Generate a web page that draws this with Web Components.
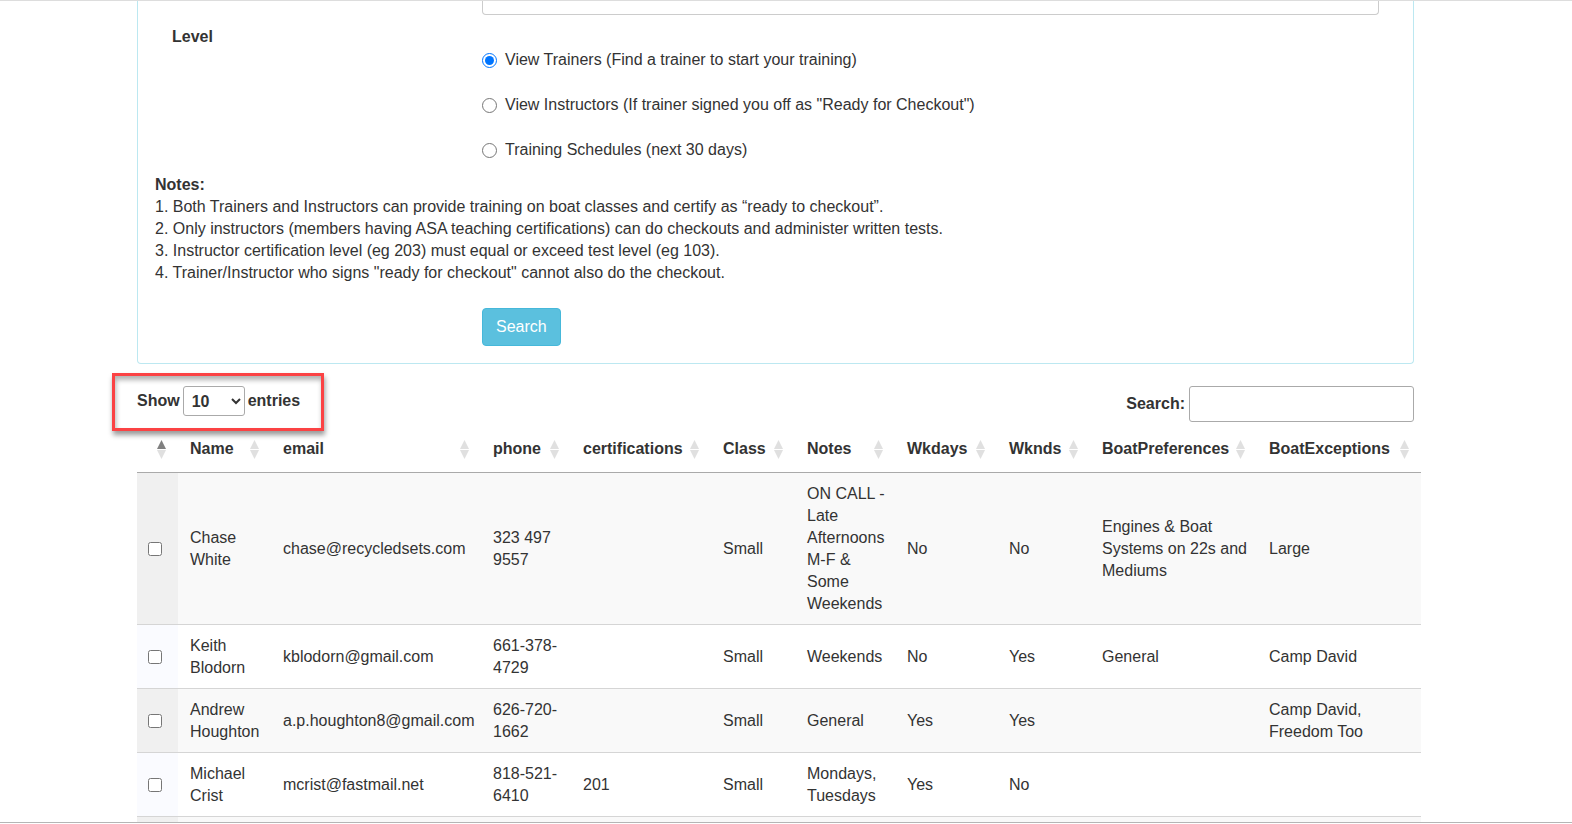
<!DOCTYPE html>
<html lang="en">
<head>
<meta charset="utf-8">
<title>Trainer search</title>
<style>
html, body { margin: 0; }
body { font: 16px/22px "Liberation Sans", Arial, sans-serif; color: #333; background: #fff; }
</style>
</head>
<body>
<trainer-page>
  <search-panel>
    <level-options slot="options"></level-options>
    <training-notes slot="notes"></training-notes>
  </search-panel>
  <table-toolbar></table-toolbar>
  <trainer-table></trainer-table>
</trainer-page>

<script>
function define(name, html, setup) {
  const template = document.createElement('template');
  template.innerHTML = '<style>*{box-sizing:border-box}</style>' + html;
  customElements.define(name, class extends HTMLElement {
    constructor() {
      super();
      this.attachShadow({ mode: 'open' }).append(template.content.cloneNode(true));
      if (setup) setup(this.shadowRoot);
    }
  });
}

define('trainer-page', `
<style>
:host { display: flex; flex-direction: column; box-sizing: border-box; height: calc(100vh - 1px); overflow: hidden;
  border-top: 1px solid #ddd; border-bottom: 1px solid #b5b5b5; }
main { flex: none; padding: 0 158px 0 137px; }
</style>
<main><slot></slot></main>`);

define('search-panel', `
<style>
:host { display: block; }
form { border: 1px solid #bce8f1; border-top: 0; border-radius: 0 0 4px 4px; padding: 0 34px 17px 17px; }
.field { display: grid; grid-template-columns: 327px 1fr; }
input { display: block; width: 100%; height: 14px; border: 1px solid #ccc; border-top: 0; border-radius: 0 0 4px 4px; background: #fff; }
.label { font-weight: bold; padding: 11px 0 0 17px; }
.right { grid-column: 2; }
button { height: 38px; padding: 0 13px; font: inherit; color: #fff; background: #5bc0de; border: 1px solid #46b8da; border-radius: 4px; }
</style>
<form onsubmit="return false">
  <div class="field"><input class="right" type="text" aria-label="Class"></div>
  <div class="field"><span class="label">Level</span><slot name="options"></slot></div>
  <slot name="notes"></slot>
  <div class="field"><div class="right"><button type="submit">Search</button></div></div>
</form>`);

define('level-options', `
<style>
:host { display: block; padding: 34px 0 13px; }
div { display: grid; gap: 23px; }
label { display: flex; align-items: center; gap: 8px; }
input { margin: 0; width: 15px; height: 15px; accent-color: #0075ff; }
</style>
<div role="radiogroup" aria-label="Level">
  <label><input type="radio" name="level" checked>View Trainers (Find a trainer to start your training)</label>
  <label><input type="radio" name="level">View Instructors (If trainer signed you off as "Ready for Checkout")</label>
  <label><input type="radio" name="level">Training Schedules (next 30 days)</label>
</div>`);

define('training-notes', `
<style>
:host { display: block; padding-bottom: 24px; }
p { margin: 0; }
</style>
<p><b>Notes:</b></p>
<p>1. Both Trainers and Instructors can provide training on boat classes and certify as “ready to checkout”.</p>
<p>2. Only instructors (members having ASA teaching certifications) can do checkouts and administer written tests.</p>
<p>3. Instructor certification level (eg 203) must equal or exceed test level (eg 103).</p>
<p>4. Trainer/Instructor who signs "ready for checkout" cannot also do the checkout.</p>`);

define('table-toolbar', `
<style>
:host { display: flex; justify-content: space-between; align-items: flex-start; padding-top: 22px; font-weight: bold; }
.length { position: relative; }
.length::after { content: ""; position: absolute; inset: -13px -24px -15px -25px; border: 3px solid #fb4244;
  box-shadow: 1px 4px 5px rgba(0,0,0,.4), inset 1px 4px 5px rgba(0,0,0,.3); pointer-events: none; }
label { display: flex; align-items: center; gap: 4px; }
.length label { gap: 3px; }
select { width: 62px; height: 30px; padding: 4px; font: inherit; color: inherit; background: #fff; border: 1px solid #aaa; border-radius: 3px; }
input { width: 225px; height: 36px; padding: 5px; font: inherit; background: #fff; border: 1px solid #aaa; border-radius: 3px; }
</style>
<div class="length"><label>Show <select><option>10</option><option>25</option><option>50</option></select> entries</label></div>
<label>Search: <input type="search"></label>`);

define('sort-mark', `
<style>
:host { display: block; width: 9px; height: 19px; --up: #e0e0e0; }
:host([active]) { --up: #808080; }
svg { display: block; }
</style>
<svg width="9" height="19" viewBox="0 0 9 19" aria-hidden="true"><path d="M0 9 4.500 0 9 9z" style="fill:var(--up)"/><path d="M0 10h9L4.500 19z" fill="#e0e0e0"/></svg>`);

const columns = [
  ['', 41], ['Name', 93], ['email', 210], ['phone', 90], ['certifications', 140], ['Class', 84],
  ['Notes', 100], ['Wkdays', 102], ['Wknds', 93], ['BoatPreferences', 167], ['BoatExceptions', 164]
];
const trainers = [
  ['Chase White', 'chase@recycledsets.com', '323 497 9557', '', 'Small', 'ON CALL - Late Afternoons M-F & Some Weekends', 'No', 'No', 'Engines & Boat Systems on 22s and Mediums', 'Large'],
  ['Keith Blodorn', 'kblodorn@gmail.com', '661-378-4729', '', 'Small', 'Weekends', 'No', 'Yes', 'General', 'Camp David'],
  ['Andrew Houghton', 'a.p.houghton8@gmail.com', '626-720-1662', '', 'Small', 'General', 'Yes', 'Yes', '', 'Camp David, Freedom Too'],
  ['Michael Crist', 'mcrist@fastmail.net', '818-521-6410', '201', 'Small', 'Mondays, Tuesdays', 'Yes', 'No', '', ''],
  ['', '', '', '', '', '', '', '', '', '']
];

define('trainer-table', `
<style>
:host { display: block; margin-right: -7px; }
table { width: 100%; table-layout: fixed; border-collapse: separate; border-spacing: 0; }
th { padding: 0; text-align: left; border-bottom: 1px solid #aaa; }
th button { display: flex; align-items: center; justify-content: space-between; width: 100%; height: 50px; padding: 4px 12px 0 12px;
  font: inherit; color: inherit; text-align: left; background: none; border: 0; }
th:first-child button { justify-content: flex-end; }
td { height: 64px; padding: 10px 10px 9px 12px; vertical-align: middle; border-bottom: 1px solid #d5d5d5; }
td:first-child { padding-left: 11px; background: #fafbff; }
tr:nth-child(odd) td { background: #f9f9f9; }
tr:nth-child(odd) td:first-child { background: #f0f0f0; }
input { display: block; width: 14px; height: 14px; margin: 0; }
</style>
<table><colgroup></colgroup><thead><tr></tr></thead><tbody></tbody></table>`, root => {
  const group = root.querySelector('colgroup'), head = root.querySelector('thead tr'), body = root.querySelector('tbody');
  columns.forEach(([title, width], i) => {
    const col = document.createElement('col');
    col.style.width = width + 'px';
    group.append(col);
    const th = document.createElement('th'), button = document.createElement('button'), mark = document.createElement('sort-mark');
    if (i === 0) { mark.setAttribute('active', ''); button.setAttribute('aria-label', 'Sort by selection'); }
    button.append(title, mark);
    th.append(button);
    head.append(th);
  });
  trainers.forEach(trainer => {
    const row = body.insertRow(), box = document.createElement('input');
    box.type = 'checkbox';
    box.setAttribute('aria-label', 'Select ' + trainer[0]);
    row.insertCell().append(trainer[0] ? box : '');
    trainer.forEach(text => row.insertCell().append(text));
  });
});
</script>
</body>
</html>
